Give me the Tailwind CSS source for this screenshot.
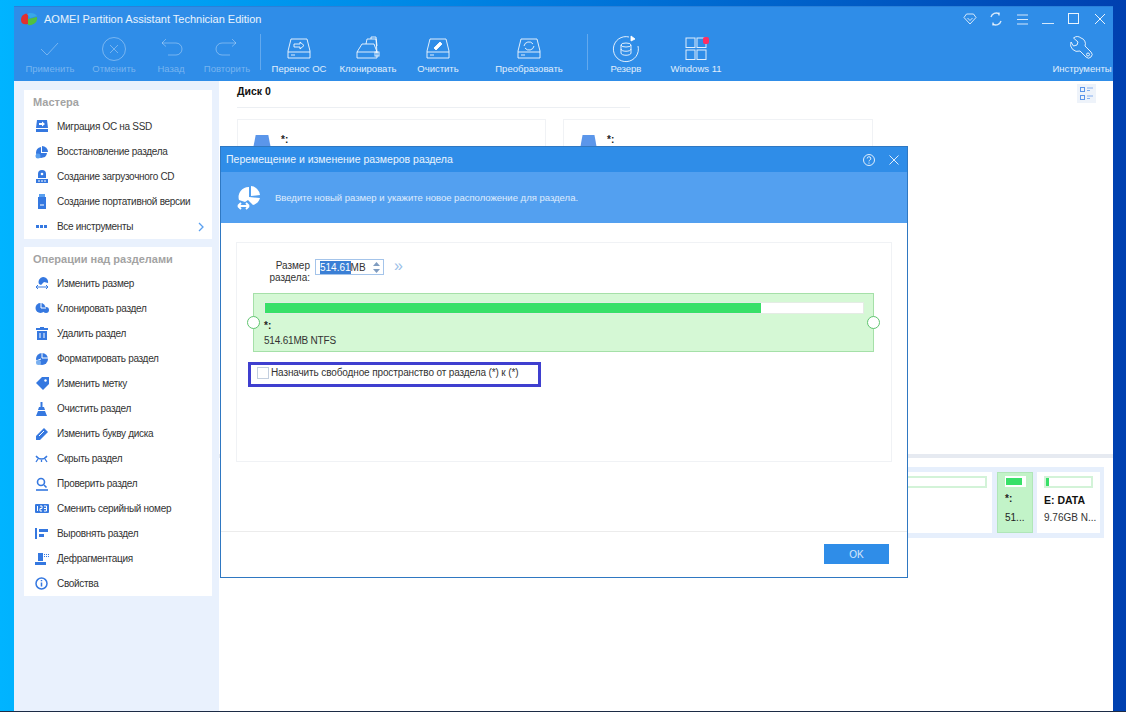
<!DOCTYPE html>
<html lang="ru">
<head>
  <meta charset="UTF-8" />
  <title>AOMEI Partition Assistant</title>
  <script src="https://cdn.jsdelivr.net/npm/@tailwindcss/browser@4"></script>
</head>
<body class="w-[1126px] h-[712px] overflow-hidden bg-linear-to-r from-[#00b4ff] via-[#0078dc] to-[#0040b0] font-['Liberation_Sans',sans-serif] text-[10px] text-[#333]">

  <div class="relative ml-[14px] mt-[6px] w-[1099px] h-[705px] bg-white flex flex-col">

    <!-- Title bar + toolbar -->
    <header class="h-[75px] bg-[#2f8de8] border-t border-[#2a80d8] shrink-0 text-white">
      <div class="h-[24px] flex items-center pl-[6px]">
        <svg width="18" height="15" viewBox="0 0 18 15"><path d="M1 8 C1 3 5 1 8 2 L8 12 C4 13 1 12 1 8Z" fill="#e03030"/><path d="M7 2 C10 0 15 1 17 4 L10 6Z" fill="#38a8e8"/><path d="M8 7 L17 5 C18 9 14 14 8 13Z" fill="#50c040"/></svg>
        <span class="ml-[6px] text-[11px] text-white/90">AOMEI Partition Assistant Technician Edition</span>
        <div class="ml-auto flex items-center">
          <span class="w-[26px] flex justify-center"><svg width="14" height="12" viewBox="0 0 14 12" fill="none" stroke="#fff" stroke-opacity=".8"><path d="M3.500 1h7L13 4.500 7 11 1 4.500z"/><path d="M4.500 5 7 7.500 9.500 5"/></svg></span>
          <span class="w-[26px] flex justify-center"><svg width="14" height="14" viewBox="0 0 14 14" fill="none" stroke="#fff" stroke-opacity=".8" stroke-width="1.400"><path d="M2 5a5.500 5.500 0 0 1 8-3.200"/><path d="M12 9a5.500 5.500 0 0 1-8 3.200"/><path d="M10 .5v3M4 10.500v3"/></svg></span>
          <span class="w-[26px] flex justify-center"><svg width="13" height="11" viewBox="0 0 13 11" stroke="#fff" stroke-opacity=".8"><path d="M1 1h11M1 5.500h11M1 10h11"/></svg></span>
          <span class="w-[26px] flex justify-center"><svg width="12" height="12" viewBox="0 0 12 12" stroke="#fff" stroke-opacity=".8"><path d="M0 10.500h12"/></svg></span>
          <span class="w-[26px] flex justify-center"><svg width="12" height="12" viewBox="0 0 12 12" fill="none" stroke="#fff" stroke-opacity=".9"><rect x=".5" y=".5" width="10" height="10"/></svg></span>
          <span class="w-[26px] flex justify-center"><svg width="12" height="12" viewBox="0 0 12 12" stroke="#fff" stroke-opacity=".9"><path d="M1 1l10 10M11 1L1 11"/></svg></span>
        </div>
      </div>

      <div class="h-[50px] flex items-stretch pl-[6px] pt-[3px] text-[9.500px]">
        <div class="w-[60px] flex flex-col items-center text-white/35">
          <svg class="h-[30px]" width="24" height="30" viewBox="0 0 24 30" fill="none" stroke="#fff" stroke-opacity=".35"><path d="M3 15l6 6L20 9"/></svg>
          <span class="-mt-[1px] leading-[12px]">Применить</span>
        </div>
        <div class="w-[68px] flex flex-col items-center text-white/35">
          <svg class="h-[30px]" width="26" height="30" viewBox="0 0 26 30" fill="none" stroke="#fff" stroke-opacity=".35"><circle cx="13" cy="15" r="11.500"/><path d="M9 11l8 8M17 11l-8 8"/></svg>
          <span class="-mt-[1px] leading-[12px]">Отменить</span>
        </div>
        <div class="w-[46px] flex flex-col items-center text-white/35">
          <svg class="h-[30px]" width="26" height="30" viewBox="0 0 26 30" fill="none" stroke="#fff" stroke-opacity=".35"><path d="M4 9h14a5.500 5.500 0 0 1 0 12h-8M8 5L4 9l4 3.500"/></svg>
          <span class="-mt-[1px] leading-[12px]">Назад</span>
        </div>
        <div class="w-[66px] flex flex-col items-center text-white/35">
          <svg class="h-[30px]" width="26" height="30" viewBox="0 0 26 30" fill="none" stroke="#fff" stroke-opacity=".35"><path d="M22 9H8a5.500 5.500 0 0 0 0 12h8M18 5l4 4-4 3.500"/></svg>
          <span class="-mt-[1px] leading-[12px]">Повторить</span>
        </div>
        <div class="w-px h-[36px] bg-white/25"></div>
        <div class="w-[76px] flex flex-col items-center text-white/85">
          <svg class="h-[30px]" width="26" height="30" viewBox="0 0 26 30" fill="none" stroke="#fff" stroke-opacity=".85"><path d="M5 5h16l3 12v7H2v-7z"/><path d="M2 18h22M5 21h4"/><path d="M8 10h6V8l4 3.500-4 3.500v-2H8z"/></svg>
          <span class="-mt-[1px] leading-[12px]">Перенос ОС</span>
        </div>
        <div class="w-[62px] flex flex-col items-center text-white/85">
          <svg class="h-[30px]" width="26" height="30" viewBox="0 0 26 30" fill="none" stroke="#fff" stroke-opacity=".85"><path d="M7 10h12l3 8v6H2v-6z"/><path d="M2 18h20M11 10l1-5h9l1 14M16 5V3h5l1 9"/><rect x="20" y="18" width="4" height="4"/></svg>
          <span class="-mt-[1px] leading-[12px]">Клонировать</span>
        </div>
        <div class="w-[78px] flex flex-col items-center text-white/85">
          <svg class="h-[30px]" width="26" height="30" viewBox="0 0 26 30" fill="none" stroke="#fff" stroke-opacity=".85"><path d="M5 5h16l3 12v7H2v-7z"/><path d="M2 18h22M5 21h4"/><path d="M9 14l6-6 2 2-6 6z" fill="#fff"/></svg>
          <span class="-mt-[1px] leading-[12px]">Очистить</span>
        </div>
        <div class="w-[104px] flex flex-col items-center text-white/85">
          <svg class="h-[30px]" width="26" height="30" viewBox="0 0 26 30" fill="none" stroke="#fff" stroke-opacity=".85"><path d="M5 5h16l3 12v7H2v-7z"/><path d="M2 18h22M5 21h4"/><path d="M8 12a5 5 0 0 1 9-2M18 12a5 5 0 0 1-9 2"/></svg>
          <span class="-mt-[1px] leading-[12px]">Преобразовать</span>
        </div>
        <div class="w-px h-[36px] ml-[6px] bg-white/25"></div>
        <div class="w-[76px] flex flex-col items-center text-white/85">
          <svg class="h-[30px]" width="28" height="30" viewBox="0 0 28 30" fill="none" stroke="#fff" stroke-opacity=".85"><path d="M17 3a12.500 12.500 0 1 0 9 9"/><path d="M19 2l4 3-4 2z" fill="#fff"/><ellipse cx="14" cy="11" rx="5" ry="2"/><path d="M9 11v8c0 3 10 3 10 0v-8M9 15c0 3 10 3 10 0"/></svg>
          <span class="-mt-[1px] leading-[12px]">Резерв</span>
        </div>
        <div class="relative w-[64px] flex flex-col items-center text-white/85">
          <svg class="h-[30px]" width="24" height="30" viewBox="0 0 24 30" fill="none" stroke="#fff" stroke-opacity=".85"><rect x="2" y="4" width="9" height="9.500"/><rect x="13" y="4" width="9" height="9.500"/><rect x="2" y="16" width="9" height="9.500"/><rect x="13" y="16" width="9" height="9.500"/></svg>
          <span class="absolute left-[39px] top-[3px] w-[6px] h-[7px] rounded-[2px] bg-[#ff2e63]"></span>
          <span class="-mt-[1px] leading-[12px]">Windows 11</span>
        </div>
        <div class="ml-auto w-[62px] flex flex-col items-center text-white/85">
          <svg class="h-[30px]" width="24" height="30" viewBox="0 0 24 30" fill="none" stroke="#fff" stroke-opacity=".85"><path d="M11 4a6 6 0 0 0-7.500 0L8 8l-1 3-3.500 1L1 8a7 7 0 0 0 9 9l6 6a3.500 3.500 0 0 0 5-5l-6-6a6 6 0 0 0-4-8z"/><circle cx="18" cy="20.500" r="1.500"/></svg>
          <span class="-mt-[1px] leading-[12px]">Инструменты</span>
        </div>
      </div>
    </header>

    <div class="flex-1 flex min-h-0">
      <!-- Sidebar -->
      <aside class="w-[205px] shrink-0 bg-[#e9f1fd] pl-[10px] pr-[7px] pt-[9px] flex flex-col gap-[8px]">
        <section class="bg-white h-[149px]">
          <h2 class="h-[24px] leading-[24px] pl-[9px] text-[11px] font-bold text-[#a3a3a3]">Мастера</h2>
          <ul class="tracking-[-0.3px] whitespace-nowrap">
            <li class="h-[25px] flex items-center"><span class="w-[33px] flex justify-center pl-[2px]"><svg width="14" height="13" viewBox="0 0 14 13" fill="#3578e0"><path d="M2 0h10l1 8H1z"/><path d="M1 9h12v3H1z"/><path d="M4 3h3V1.500L10 4 7 6.500V5H4z" fill="#fff"/></svg></span><span>Миграция ОС на SSD</span></li>
            <li class="h-[25px] flex items-center"><span class="w-[33px] flex justify-center pl-[2px]"><svg width="14" height="14" viewBox="0 0 14 14" fill="#3578e0"><path d="M7 1a6 6 0 0 1 6 6H7z"/><path d="M6 2v6h6a6 6 0 0 1-2 4L6 13a6 6 0 0 1-5-5 6 6 0 0 1 5-6z"/><circle cx="3" cy="11" r="2.500" fill="#5aa0f0"/></svg></span><span>Восстановление раздела</span></li>
            <li class="h-[25px] flex items-center"><span class="w-[33px] flex justify-center pl-[2px]"><svg width="14" height="14" viewBox="0 0 14 14" fill="#3578e0"><path d="M7 0a4 4 0 0 1 4 4v4H3V4a4 4 0 0 1 4-4z"/><circle cx="7" cy="4" r="1.300" fill="#fff"/><path d="M1 9h12v4H1z"/><path d="M3 11h2M6 11h2M9 11h2" stroke="#fff"/></svg></span><span>Создание загрузочного CD</span></li>
            <li class="h-[25px] flex items-center"><span class="w-[33px] flex justify-center pl-[2px]"><svg width="10" height="15" viewBox="0 0 10 15" fill="#3578e0"><path d="M2 0h6v3H2z" fill="#5aa0f0"/><path d="M1 3h8v12H1z"/><path d="M3 11h4" stroke="#fff"/></svg></span><span>Создание портативной версии</span></li>
            <li class="h-[25px] flex items-center"><span class="w-[33px] flex justify-center pl-[2px]"><svg width="11" height="3" viewBox="0 0 11 3" fill="#3578e0"><path d="M0 0h3v3H0zM4 0h3v3H4zM8 0h3v3H8z"/></svg></span><span>Все инструменты</span><svg class="ml-auto mr-[8px]" width="6" height="10" viewBox="0 0 6 10" fill="none" stroke="#5aa0f0" stroke-width="1.300"><path d="M1 1l4 4-4 4"/></svg></li>
          </ul>
        </section>
        <section class="bg-white h-[349px]">
          <h2 class="h-[24px] leading-[24px] pl-[9px] text-[11px] font-bold text-[#a3a3a3]">Операции над разделами</h2>
          <ul class="tracking-[-0.3px] whitespace-nowrap">
            <li class="h-[25px] flex items-center"><span class="w-[33px] flex justify-center pl-[2px]"><svg width="14" height="13" viewBox="0 0 14 13" fill="#3578e0"><path d="M8 0a5 5 0 0 1 5 6l-4-1-3 3-2-1a5 5 0 0 1 4-7z"/><path d="M1 10h12M1 10l2-2M1 10l2 2M13 10l-2-2M13 10l-2 2" stroke="#3578e0" fill="none"/></svg></span><span>Изменить размер</span></li>
            <li class="h-[25px] flex items-center"><span class="w-[33px] flex justify-center pl-[2px]"><svg width="14" height="13" viewBox="0 0 14 13" fill="#3578e0"><circle cx="5.500" cy="6" r="5"/><circle cx="11" cy="8" r="3"/><path d="M6 1v5h5" stroke="#fff" fill="none"/></svg></span><span>Клонировать раздел</span></li>
            <li class="h-[25px] flex items-center"><span class="w-[33px] flex justify-center pl-[2px]"><svg width="12" height="13" viewBox="0 0 12 13" fill="#3578e0"><path d="M4 0h4v1h4v2H0V1h4z"/><path d="M1 4h10v9H1z"/><path d="M4 6v5M8 6v5" stroke="#fff"/></svg></span><span>Удалить раздел</span></li>
            <li class="h-[25px] flex items-center"><span class="w-[33px] flex justify-center pl-[2px]"><svg width="14" height="14" viewBox="0 0 14 14" fill="#3578e0"><circle cx="7" cy="7" r="6"/><path d="M7 1v5h6M1 9l5-2" stroke="#fff" fill="none"/><circle cx="3.500" cy="10.500" r="2.500" fill="#7ab0f0"/></svg></span><span>Форматировать раздел</span></li>
            <li class="h-[25px] flex items-center"><span class="w-[33px] flex justify-center pl-[2px]"><svg width="14" height="13" viewBox="0 0 14 13" fill="#3578e0"><path d="M7 0h7v7l-6 6-7-7z"/><circle cx="10.500" cy="3.500" r="1.200" fill="#fff"/></svg></span><span>Изменить метку</span></li>
            <li class="h-[25px] flex items-center"><span class="w-[33px] flex justify-center pl-[2px]"><svg width="13" height="14" viewBox="0 0 13 14" fill="#3578e0"><path d="M5.500 0h2v5h-2z"/><path d="M4 5h5l1 3H3z"/><path d="M3 9h7l2 5H1z"/></svg></span><span>Очистить раздел</span></li>
            <li class="h-[25px] flex items-center"><span class="w-[33px] flex justify-center pl-[2px]"><svg width="14" height="14" viewBox="0 0 14 14" fill="#3578e0"><path d="M9 1l4 4-8 8H1v-4z"/><path d="M4 9l5-5" stroke="#fff"/></svg></span><span>Изменить букву диска</span></li>
            <li class="h-[25px] flex items-center"><span class="w-[33px] flex justify-center pl-[2px]"><svg width="13" height="8" viewBox="0 0 13 8" fill="none" stroke="#3578e0" stroke-width="1.300"><path d="M1 1c3 4 8 4 11 0"/><path d="M3 4L1 7M6.500 5v2M10 4l2 3"/></svg></span><span>Скрыть раздел</span></li>
            <li class="h-[25px] flex items-center"><span class="w-[33px] flex justify-center pl-[2px]"><svg width="14" height="14" viewBox="0 0 14 14" fill="none" stroke="#3578e0" stroke-width="1.600"><circle cx="6" cy="5" r="3.500"/><path d="M9 8l2.500 2.500"/><path d="M1 13h12"/></svg></span><span>Проверить раздел</span></li>
            <li class="h-[25px] flex items-center"><span class="w-[33px] flex justify-center pl-[2px]"><svg width="14" height="9" viewBox="0 0 14 9" fill="#3578e0"><rect width="14" height="9" rx="1"/><path d="M2.500 2v5M5 2h2v2.500H5V7h2M9 2h2.500v5H9M9 4.500h2.500" stroke="#fff" fill="none"/></svg></span><span>Сменить серийный номер</span></li>
            <li class="h-[25px] flex items-center"><span class="w-[33px] flex justify-center pl-[2px]"><svg width="13" height="11" viewBox="0 0 13 11" fill="#3578e0"><path d="M0 0h2v11H0zM4 1h9v3H4zM4 6h5v3H4z"/></svg></span><span>Выровнять раздел</span></li>
            <li class="h-[25px] flex items-center"><span class="w-[33px] flex justify-center pl-[2px]"><svg width="14" height="12" viewBox="0 0 14 12" fill="#3578e0"><path d="M3 0h5v8H3zM0 9h11v3H0z"/><path d="M9 1h1v1H9zM11 1h1v1h-1zM13 1h1v1h-1zM9 3h1v1H9zM11 3h1v1h-1zM13 3h1v1h-1z"/></svg></span><span>Дефрагментация</span></li>
            <li class="h-[25px] flex items-center"><span class="w-[33px] flex justify-center pl-[2px]"><svg width="13" height="13" viewBox="0 0 13 13" fill="none" stroke="#3578e0" stroke-width="1.500"><circle cx="6.500" cy="6.500" r="5.500"/><path d="M6.500 5.500v4M6.500 3v1.300"/></svg></span><span>Свойства</span></li>
          </ul>
        </section>
      </aside>

      <!-- Main -->
      <main class="relative flex-1 min-w-0 flex flex-col">
        <div class="h-[373px] shrink-0 pl-[18px]">
          <div class="w-[393px] h-[27px] border-b border-[#eceff3] pt-[3px] text-[10.500px] font-bold text-[#111] leading-[14px]">Диск 0</div>
          <div class="flex gap-[17px] mt-[11px]">
            <div class="w-[309px] h-[120px] border border-[#f0f2f5] flex pt-[15px] pl-[15px] gap-[10px]">
              <div class="w-[18px] h-[14px] bg-[#5b96ea] [clip-path:polygon(15%_0,85%_0,100%_100%,0_100%)]"></div>
              <span class="font-bold text-[#222] leading-[10px]">*:</span>
            </div>
            <div class="w-[310px] h-[120px] border border-[#f0f2f5] flex pt-[15px] pl-[16px] gap-[10px]">
              <div class="w-[17px] h-[14px] bg-[#5b96ea] [clip-path:polygon(15%_0,85%_0,100%_100%,0_100%)]"></div>
              <span class="font-bold text-[#222] leading-[10px]">*:</span>
            </div>
          </div>
        </div>
        <button class="absolute left-[858px] top-[3px] w-[19px] h-[19px] bg-[#eef3fa] flex items-center justify-center"><svg width="15" height="15" viewBox="0 0 15 15" fill="none" stroke="#5b96ea"><rect x="1.500" y="1.500" width="4" height="4"/><rect x="1.500" y="9.500" width="4" height="4"/><path d="M8 2h6M8 4.500h3M8 10h6M8 12.500h3" stroke-opacity=".7"/></svg></button>
        <div class="h-[4px] bg-[#e6eaf1] shrink-0"></div>
        <div class="mt-[9px] ml-[18px] w-[867px] h-[71px] bg-[#e6effc] py-[5px] pl-[5px] pr-[4px] flex gap-[4px]">
          <div class="flex-1 mr-[1px] bg-white pt-[4px] pr-[5px]"><div class="h-[12px] border-2 border-[#d3f3d8]"></div></div>
          <div class="w-[36px] bg-[#c2f3c8] border border-[#b0e6b8] pt-[3px] pl-[7px] pr-[6px]">
            <div class="h-[11px] bg-white pr-[4px] pl-[1px] py-[2px]"><div class="h-full bg-[#38e068]"></div></div>
            <div class="mt-[6px] font-bold leading-[12px] text-[#222]">*:</div>
            <div class="mt-[6px] leading-[14px] text-[#222]">51...</div>
          </div>
          <div class="w-[63px] bg-white pt-[4px] px-[7px]">
            <div class="h-[12px] border-2 border-[#d3f3d8] pr-[42px]"><div class="h-full bg-[#38e068]"></div></div>
            <div class="mt-[6px] text-[10.500px] font-bold leading-[12px] text-[#111] whitespace-nowrap">E: DATA</div>
            <div class="mt-[5px] leading-[14px] text-[#333] whitespace-nowrap">9.76GB N...</div>
          </div>
        </div>
      </main>
    </div>

    <!-- Dialog -->
    <div class="absolute left-[206px] top-[140px] w-[688px] h-[432px] bg-white border border-[#2f78c2] flex flex-col">
      <div class="h-[25px] bg-[#2f8de8] flex items-center pl-[5px] pr-[7px] text-[10.500px] text-white/90 shrink-0">
        <span>Перемещение и изменение размеров раздела</span>
        <svg class="ml-auto" width="14" height="14" viewBox="0 0 14 14" fill="none" stroke="#fff" stroke-opacity=".85"><circle cx="7" cy="7" r="5.500"/><path d="M5.200 5.500a1.800 1.800 0 1 1 2.500 1.700c-.5.300-.7.600-.7 1.200M7 9.500v1.200"/></svg>
        <svg class="ml-[12px]" width="12" height="12" viewBox="0 0 12 12" stroke="#fff" stroke-opacity=".85"><path d="M1.500 1.500l9 9M10.500 1.500l-9 9"/></svg>
      </div>
      <div class="h-[51px] bg-[#53a0f0] flex items-center pl-[16px] shrink-0">
        <svg width="26" height="26" viewBox="0 0 26 26" fill="#fff"><path d="M14 1a10 10 0 0 1 9 9l-9 1z"/><path d="M12 2v10l11 1a10 10 0 0 1-7 7l-5-5-3 2-6-2A10 10 0 0 1 12 2z"/><path d="M1 21h11M1 21l3-3M1 21l3 3M12 21l-3-3M12 21l-3 3" stroke="#fff" stroke-width="1.800" fill="none"/></svg>
        <span class="ml-[12px] pt-[2px] text-[9.500px] text-white/80">Введите новый размер и укажите новое расположение для раздела.</span>
      </div>
      <div class="relative mx-[15px] mt-[19px] w-[656px] h-[220px] border border-[#f0f2f5] pt-[16px] shrink-0">
        <div class="flex items-start pl-[16px]">
          <div class="w-[57px] mt-[1px] text-right leading-[12px] text-[#333]">Размер<br>раздела:</div>
          <div class="ml-[5px] w-[69px] h-[16px] border border-[#a4c4ea] flex items-center pl-[4px] text-[#333]">
            <span class="bg-[#3a7fd5] text-white leading-[13px]">514.61</span><span>MB</span>
            <svg class="ml-auto mr-[3px]" width="7" height="11" viewBox="0 0 7 11" fill="#7f9cc0"><path d="M3.500 0L7 4H0zM0 7h7l-3.500 4z"/></svg>
          </div>
          <span class="ml-[10px] text-[16px] leading-[14px] text-[#9cbfe8]">»</span>
        </div>
        <div class="relative ml-[16px] mt-[9px] w-[621px] h-[59px] bg-[#d5f8d5] border border-[#a5e0a8] pl-[10px] pr-[9px] pt-[8px]">
          <div class="h-[12px] bg-white border border-[#e4ece4]"><div class="h-full w-[83%] bg-[#38e068]"></div></div>
          <div class="mt-[6px] font-bold leading-[12px] text-[#222]">*:</div>
          <div class="mt-[2px] leading-[14px] tracking-[-0.2px] text-[#333]">514.61MB NTFS</div>
          <span class="absolute -left-[7px] top-[22px] w-[13px] h-[13px] rounded-full bg-white border border-[#5fc46f]"></span>
          <span class="absolute -right-[7px] top-[22px] w-[13px] h-[13px] rounded-full bg-white border border-[#5fc46f]"></span>
        </div>
        <div class="ml-[11px] mt-[10px] w-[293px] h-[25px] border-[3px] border-[#3f3fcf] flex items-center pl-[6px] pb-[4px] text-[#333] tracking-[-0.12px]">
          <span class="w-[12px] h-[12px] border border-[#c3cfdf] bg-white shrink-0"></span>
          <span class="ml-[2px] whitespace-nowrap">Назначить свободное пространство от раздела (*) к (*)</span>
        </div>
      </div>
      <div class="mt-[69px] border-t border-[#ececec] flex-1 flex items-start justify-end pr-[18px] pt-[12px]">
        <button class="w-[65px] h-[20px] bg-[#2f8de8] text-white/80 text-[10px]">OK</button>
      </div>
    </div>
  </div>
  <div class="h-[1px] bg-[#1c2b45]"></div>
</body>
</html>
